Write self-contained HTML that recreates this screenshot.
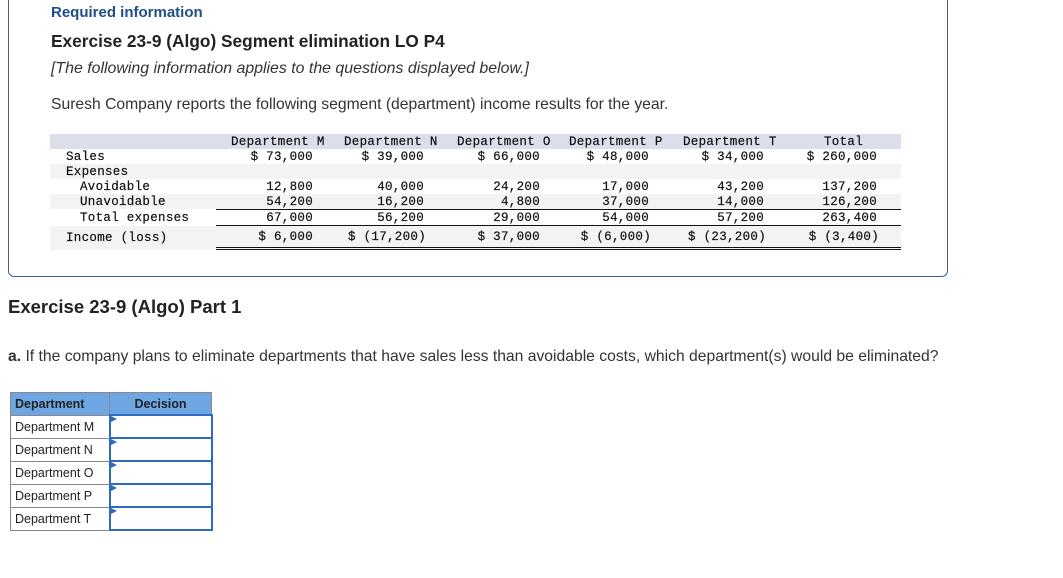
<!DOCTYPE html>
<html><head><meta charset="utf-8"><style>
body{margin:0;width:1063px;height:578px;background:#fff;position:relative;overflow:hidden;font-family:"Liberation Sans",sans-serif;color:#222}
.a{position:absolute;white-space:nowrap}
.box{position:absolute;left:8px;top:-10px;width:938px;height:285px;border:1.5px solid #3d5f8a;border-radius:6px}
.m{font-family:"Liberation Mono",monospace;font-size:12.5px;letter-spacing:0.3px;color:#111;-webkit-text-stroke:0.2px #111}
.r{text-align:right}
.row{position:absolute;left:50px;width:851px;height:15px}
.line{position:absolute;left:216px;width:685px;height:1px;background:#111}
table.d{position:absolute;left:10px;top:392px;border-collapse:collapse;font-size:12.5px}
table.d td{border:1px solid #888;height:21px;padding:0 4px}
table.d th{background:#6ea6e4;border:1px solid #888;height:21px;padding:0 4px;font-weight:bold;font-size:12.5px}
.in{border:2px solid #2e6bbf!important;width:92px;position:relative}
.in:before{content:"";position:absolute;left:0;top:0;border-left:6px solid #2e6bbf;border-top:3px solid transparent;border-bottom:3px solid transparent}
</style></head><body>
<div class="box"></div>
<div class="a" style="left:51px;top:4px;font-size:15px;font-weight:bold;color:#1f4f86">Required information</div>
<div class="a" style="left:51px;top:31px;font-size:17.3px;font-weight:bold;color:#222">Exercise 23-9 (Algo) Segment elimination LO P4</div>
<div class="a" style="left:51px;top:60px;font-size:15.9px;font-style:italic;color:#333">[The following information applies to the questions displayed below.]</div>
<div class="a" style="left:51px;top:96px;font-size:15.7px;color:#333">Suresh Company reports the following segment (department) income results for the year.</div>

<div class="row" style="top:134px;background:#dcdfea"></div>
<div class="row" style="top:164px;background:#f3f3f3"></div>
<div class="row" style="top:194px;background:#f3f3f3"></div>
<div class="row" style="top:226px;height:24px;background:#f3f3f3"></div>
<div class="line" style="top:209px"></div>
<div class="line" style="top:225px"></div>
<div class="line" style="top:247px"></div>
<div class="line" style="top:249px"></div>

<div class="a m" style="left:231px;top:135px">Department M</div>
<div class="a m" style="left:344px;top:135px">Department N</div>
<div class="a m" style="left:457px;top:135px">Department O</div>
<div class="a m" style="left:569px;top:135px">Department P</div>
<div class="a m" style="left:683px;top:135px">Department T</div>
<div class="a m" style="left:824px;top:135px">Total</div>

<div class="a m" style="left:66px;top:150px">Sales</div>
<div class="a m" style="left:66px;top:165px">Expenses</div>
<div class="a m" style="left:80px;top:180px">Avoidable</div>
<div class="a m" style="left:80px;top:195px">Unavoidable</div>
<div class="a m" style="left:80px;top:211px">Total expenses</div>
<div class="a m" style="left:66px;top:231px">Income (loss)</div>

<div class="a m r" style="right:750px;top:150px">$ 73,000</div>
<div class="a m r" style="right:639px;top:150px">$ 39,000</div>
<div class="a m r" style="right:523px;top:150px">$ 66,000</div>
<div class="a m r" style="right:414px;top:150px">$ 48,000</div>
<div class="a m r" style="right:299px;top:150px">$ 34,000</div>
<div class="a m r" style="right:186px;top:150px">$ 260,000</div>

<div class="a m r" style="right:750px;top:180px">12,800</div>
<div class="a m r" style="right:639px;top:180px">40,000</div>
<div class="a m r" style="right:523px;top:180px">24,200</div>
<div class="a m r" style="right:414px;top:180px">17,000</div>
<div class="a m r" style="right:299px;top:180px">43,200</div>
<div class="a m r" style="right:186px;top:180px">137,200</div>

<div class="a m r" style="right:750px;top:195px">54,200</div>
<div class="a m r" style="right:639px;top:195px">16,200</div>
<div class="a m r" style="right:523px;top:195px">4,800</div>
<div class="a m r" style="right:414px;top:195px">37,000</div>
<div class="a m r" style="right:299px;top:195px">14,000</div>
<div class="a m r" style="right:186px;top:195px">126,200</div>

<div class="a m r" style="right:750px;top:211px">67,000</div>
<div class="a m r" style="right:639px;top:211px">56,200</div>
<div class="a m r" style="right:523px;top:211px">29,000</div>
<div class="a m r" style="right:414px;top:211px">54,000</div>
<div class="a m r" style="right:299px;top:211px">57,200</div>
<div class="a m r" style="right:186px;top:211px">263,400</div>

<div class="a m r" style="right:750px;top:230px">$ 6,000</div>
<div class="a m r" style="right:637px;top:230px">$ (17,200)</div>
<div class="a m r" style="right:523px;top:230px">$ 37,000</div>
<div class="a m r" style="right:412px;top:230px">$ (6,000)</div>
<div class="a m r" style="right:297px;top:230px">$ (23,200)</div>
<div class="a m r" style="right:184px;top:230px">$ (3,400)</div>

<div class="a" style="left:8px;top:296px;font-size:18.5px;font-weight:bold;color:#222">Exercise 23-9 (Algo) Part 1</div>
<div class="a" style="left:8px;top:348px;font-size:15.7px;color:#333"><b>a.</b> If the company plans to eliminate departments that have sales less than avoidable costs, which department(s) would be eliminated?</div>

<table class="d">
<tr><th style="width:90px;text-align:left">Department</th><th style="width:92px">Decision</th></tr>
<tr><td>Department M</td><td class="in"></td></tr>
<tr><td>Department N</td><td class="in"></td></tr>
<tr><td>Department O</td><td class="in"></td></tr>
<tr><td>Department P</td><td class="in"></td></tr>
<tr><td>Department T</td><td class="in"></td></tr>
</table>
</body></html>
